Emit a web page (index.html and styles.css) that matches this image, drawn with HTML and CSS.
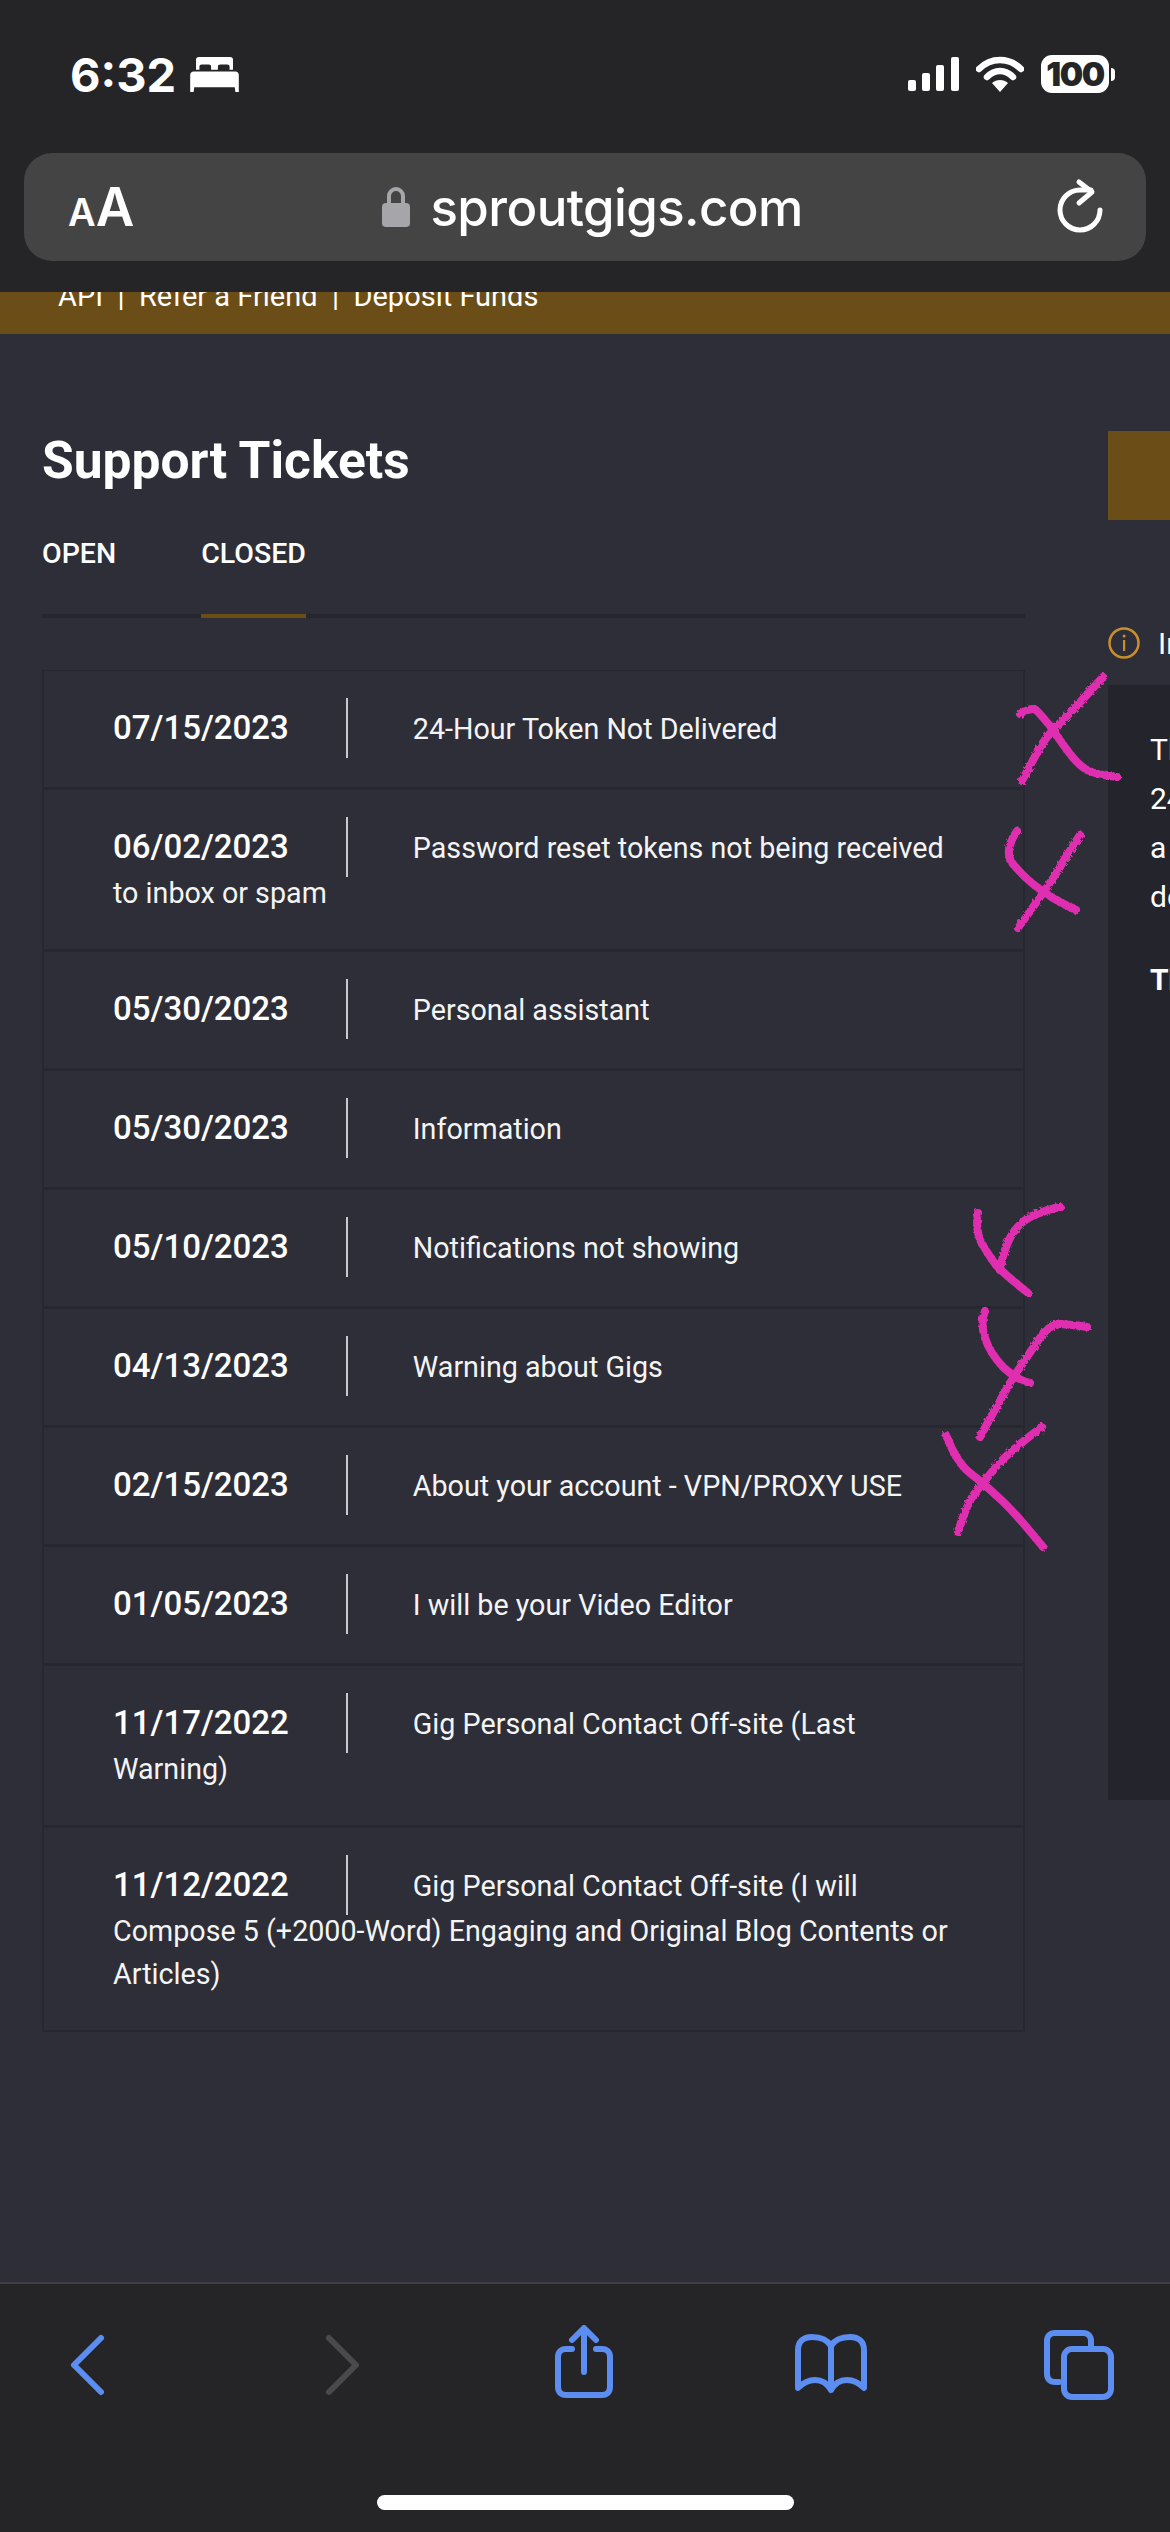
FILE: index.html
```html
<!DOCTYPE html>
<html lang="en">
<head>
  <meta charset="UTF-8">
  <title>Support Tickets | SproutGigs</title>
  <link rel="stylesheet" href="styles.css">
</head>
<body>
  <header class="browser-top">
    <div class="status-bar">
      <div class="status-left">
        <span class="clock">6:32</span>
        <svg class="bed-icon" viewBox="0 0 50 36"><path fill="#fff" d="M6 2.500C6 1 7 0 9 0h32c2 0 3 1 3 2.500V13h-3.500V10c0-1.500-.8-2.300-2.500-2.300h-7c-1.700 0-2.500.8-2.500 2.300v3h-7v-3c0-1.500-.8-2.300-2.500-2.300h-7C10.300 7.700 9.500 8.500 9.500 10v3H6zM3.500 15h43c2 0 3.500 1.500 3.500 3.500V36h-3.500l-.7-5H4.200l-.7 5H0V18.500C0 16.500 1.500 15 3.500 15z"/></svg>
      </div>
      <div class="status-right">
        <svg class="signal-icon" viewBox="0 0 51 34"><rect x="0" y="23" width="8" height="11" rx="2"/><rect x="14" y="16" width="8" height="18" rx="2"/><rect x="28" y="8" width="8" height="26" rx="2"/><rect x="43" y="0" width="8" height="34" rx="2"/></svg>
        <svg class="wifi-icon" viewBox="0 0 48 36"><path d="M3 13C15 1 33 1 45 13M11 21c8-8 18-8 26 0" fill="none" stroke="#fff" stroke-width="6.500" stroke-linecap="round"/><path fill="#fff" d="M24 36l-8-9c4.500-4 11.500-4 16 0z"/></svg>
        <div class="battery"><span class="battery-level">100</span><span class="battery-nub"></span></div>
      </div>
    </div>
    <div class="url-bar">
      <span class="text-size"><small>A</small>A</span>
      <div class="url">
        <svg class="lock-icon" viewBox="0 0 28 40"><path d="M7 18V9a7 7 0 0 1 14 0v9" fill="none" stroke="#a5a5aa" stroke-width="4"/><rect x="0" y="16" width="28" height="24" rx="4" fill="#a5a5aa"/></svg>
        <span>sproutgigs.com</span>
      </div>
      <svg class="reload-icon" viewBox="0 0 46 54"><path d="M42 30A20 20 0 1 1 22 10H33" fill="none" stroke="#fff" stroke-width="5" stroke-linecap="round"/><path d="M21 2l13 10-13 11" fill="none" stroke="#fff" stroke-width="5" stroke-linecap="round" stroke-linejoin="round"/></svg>
    </div>
  </header>

  <div class="top-links"><span>API &nbsp;|&nbsp; Refer a Friend &nbsp;|&nbsp; Deposit Funds</span></div>

  <main class="page">
    <section class="tickets">
      <h1>Support Tickets</h1>
      <nav class="tabs">
        <a class="tab" href="#">OPEN</a>
        <a class="tab active" href="#">CLOSED</a>
      </nav>
      <div class="ticket-list">
        <div class="ticket"><span class="date">07/15/2023</span><a class="subject">24-Hour Token Not Delivered</a></div>
        <div class="ticket"><span class="date">06/02/2023</span><a class="subject">Password reset tokens not being received to inbox or spam</a></div>
        <div class="ticket"><span class="date">05/30/2023</span><a class="subject">Personal assistant</a></div>
        <div class="ticket"><span class="date">05/30/2023</span><a class="subject">Information</a></div>
        <div class="ticket"><span class="date">05/10/2023</span><a class="subject">Notifications not showing</a></div>
        <div class="ticket"><span class="date">04/13/2023</span><a class="subject">Warning about Gigs</a></div>
        <div class="ticket"><span class="date">02/15/2023</span><a class="subject">About your account - VPN/PROXY USE</a></div>
        <div class="ticket"><span class="date">01/05/2023</span><a class="subject">I will be your Video Editor</a></div>
        <div class="ticket"><span class="date">11/17/2022</span><a class="subject">Gig Personal Contact Off-site (Last Warning)</a></div>
        <div class="ticket"><span class="date">11/12/2022</span><a class="subject">Gig Personal Contact Off-site (I will Compose 5 (+2000-Word) Engaging and Original Blog Contents or Articles)</a></div>
      </div>
    </section>

    <aside class="side">
      <div class="side-button"></div>
      <div class="side-info">
        <svg class="info-icon" viewBox="0 0 32 32"><circle cx="16" cy="16" r="14.500" fill="none" stroke="#c98f2c" stroke-width="2.500"/><rect x="15" y="13" width="2.200" height="11" fill="#c98f2c"/><circle cx="16.100" cy="9" r="1.500" fill="#c98f2c"/></svg>
        <span>Information</span>
      </div>
      <div class="side-panel">
        <p>The<br>24-hour<br>a<br>de</p>
        <p class="side-bold">The</p>
      </div>
    </aside>
  </main>

  <footer class="browser-bottom">
    <div class="toolbar">
      <svg class="tool back" viewBox="0 0 40 64"><path d="M33 5L6 32l27 27"/></svg>
      <svg class="tool forward" viewBox="0 0 40 64"><path d="M7 5l27 27L7 59"/></svg>
      <svg class="tool share" viewBox="0 0 60 74"><path d="M18 24h-6c-5 0-8 3-8 8v30c0 5 3 8 8 8h36c5 0 8-3 8-8V32c0-5-3-8-8-8h-6"/><path d="M30 47V4M18 15L30 3l12 12"/></svg>
      <svg class="tool book" viewBox="0 0 74 62"><path d="M37 12C33 5 26 3 18 3 9 3 4 8 4 16v38c6-6 11-8 17-8 7 0 12 3 16 10 4-7 9-10 16-10 6 0 11 2 17 8V16C70 8 65 3 56 3c-8 0-15 2-19 9zM37 12v44"/></svg>
      <svg class="tool tabs-icon" viewBox="0 0 70 70"><path d="M15 52h-4c-5 0-8-3-8-8V11c0-5 3-8 8-8h28c5 0 8 3 8 8v7"/><rect x="20" y="19" width="47" height="48" rx="8"/></svg>
    </div>
    <div class="home-indicator"></div>
  </footer>

  <svg class="scribbles" viewBox="0 0 1170 2532">
    <defs>
      <filter id="rough" x="-5%" y="-5%" width="110%" height="110%">
        <feTurbulence type="fractalNoise" baseFrequency="0.35" numOctaves="2" seed="4"/>
        <feDisplacementMap in="SourceGraphic" scale="4"/>
      </filter>
    </defs>
    <g filter="url(#rough)">
      <path d="M1020 714Q1033 706 1037 711Q1042 716 1050 726Q1057 736 1067 750Q1077 764 1087 770Q1097 775 1117 777"/>
      <path d="M1103 677Q1077 706 1064 719Q1050 732 1042 744Q1035 756 1022 781"/>
      <path d="M1017 831Q1003 851 1013 864Q1023 876 1033 884Q1043 892 1053 898Q1063 904 1076 910"/>
      <path d="M1080 835Q1067 855 1057 872Q1047 888 1018 928"/>
      <path d="M978 1213Q975 1230 982 1244Q990 1257 996 1265Q1003 1273 1028 1293"/>
      <path d="M1060 1207Q1033 1213 1023 1222Q1013 1230 1008 1242Q1003 1253 1000 1270"/>
      <path d="M985 1311Q980 1323 985 1338Q990 1353 1003 1367Q1017 1380 1030 1383"/>
      <path d="M1087 1327Q1063 1323 1055 1325Q1047 1327 1037 1342Q1027 1357 1017 1372Q1007 1387 980 1437"/>
      <path d="M946 1435Q957 1463 970 1473Q983 1483 998 1497Q1013 1510 1043 1547"/>
      <path d="M1042 1427Q1007 1453 995 1468Q983 1483 975 1493Q967 1503 958 1532"/>
    </g>
  </svg>
</body>
</html>
```

FILE: styles.css
```css
html, body {
  margin: 0;
  padding: 0;
}
body {
  position: relative;
  width: 1170px;
  height: 2532px;
  overflow: hidden;
  display: flex;
  flex-direction: column;
  background-color: #2d2e38;
  color: #fff;
  font-family: 'Roboto', 'Liberation Sans', sans-serif;
}

/* browser chrome, top */
.browser-top {
  height: 292px;
  flex-shrink: 0;
  box-sizing: border-box;
  padding: 55px 24px 0;
  background-color: #252527;
}
.status-bar {
  display: flex;
  justify-content: space-between;
  align-items: center;
  height: 38px;
  padding: 0 31px 0 46px;
}
.status-left,
.status-right {
  display: flex;
  align-items: center;
}
.clock {
  font-family: 'Inter', sans-serif;
  font-size: 47px;
  font-weight: 700;
}
.bed-icon {
  width: 49px;
  height: 35px;
  margin-left: 14px;
}
.signal-icon {
  width: 51px;
  height: 34px;
  fill: #fff;
}
.wifi-icon {
  width: 48px;
  height: 36px;
  margin-left: 17px;
}
.battery {
  display: flex;
  align-items: center;
  margin-left: 17px;
}
.battery-level {
  width: 68px;
  height: 38px;
  border-radius: 11px;
  background-color: #fff;
  color: #252527;
  font-family: 'Inter', sans-serif;
  font-size: 33px;
  font-weight: 900;
  line-height: 38px;
  text-align: center;
  letter-spacing: -1.500px;
}
.battery-nub {
  width: 4px;
  height: 13px;
  margin-left: 2px;
  border-radius: 0 4px 4px 0;
  background-color: #fff;
}
.url-bar {
  display: flex;
  align-items: center;
  justify-content: space-between;
  height: 108px;
  margin-top: 60px;
  padding: 0 42px 0 44px;
  border-radius: 28px;
  background-color: #444445;
}
.text-size {
  font-family: 'Inter', sans-serif;
  font-size: 53px;
  font-weight: 600;
}
.text-size small {
  font-size: 38px;
}
.url {
  display: flex;
  align-items: center;
  gap: 21px;
  margin-left: -8px;
  font-family: 'Inter', sans-serif;
  font-size: 51px;
  font-weight: 500;
  letter-spacing: -.6px;
}
.lock-icon {
  width: 28px;
  height: 40px;
}
.reload-icon {
  width: 46px;
  height: 54px;
  overflow: visible;
}

.top-links {
  height: 42px;
  flex-shrink: 0;
  overflow: hidden;
  padding-left: 58px;
  background-color: #6b4d17;
  font-size: 29px;
  line-height: 32px;
}
.top-links span {
  display: block;
  margin-top: -12px;
}

/* page */
.page {
  flex: 1;
  display: flex;
  gap: 83px;
  padding-left: 42px;
  min-height: 0;
}
.tickets {
  width: 983px;
  flex-shrink: 0;
}
h1 {
  margin: 97px 0 0;
  font-size: 51.5px;
  font-weight: 700;
  line-height: 60px;
}
.tabs {
  display: flex;
  gap: 85px;
  margin-top: 45px;
  border-bottom: 4px solid #25262e;
}
.tab {
  margin-bottom: -4px;
  padding-bottom: 42px;
  border-bottom: 4px solid transparent;
  color: #fff;
  font-size: 28.5px;
  font-weight: 500;
  line-height: 36px;
  text-decoration: none;
}
.tab.active {
  border-bottom-color: #6b4d17;
}
.ticket-list {
  margin-top: 52px;
  border: solid #262730;
  border-width: 1px 2px 2px;
}
.ticket {
  padding: 27px 62px 34px 69px;
  border-bottom: 3px solid #262730;
  font-size: 28.7px;
  line-height: 43px;
}
.ticket:last-child {
  border-bottom: 0;
}
.date {
  display: inline-block;
  margin-right: 65px;
  margin-bottom: -5px;
  padding-right: 57px;
  border-right: 2px solid #c9c9cd;
  font-size: 33px;
  font-weight: 500;
  line-height: 60px;
}
.subject {
  color: #f4f4f4;
}

/* right column, cut off by the window */
.side {
  width: 500px;
  flex-shrink: 0;
  margin-top: 97px;
}
.side-button {
  height: 89px;
  background-color: #6b4d17;
}
.side-info {
  display: flex;
  align-items: center;
  gap: 18px;
  height: 32px;
  margin-top: 107px;
  font-size: 30px;
}
.info-icon {
  width: 32px;
  height: 32px;
}
.side-panel {
  height: 1115px;
  box-sizing: border-box;
  margin-top: 26px;
  padding: 40px 0 0 42px;
  background-color: #23242c;
  font-size: 30px;
  line-height: 49px;
}
.side-panel p {
  margin: 0 0 34px;
}
.side-bold {
  font-weight: 700;
}

/* browser chrome, bottom */
.browser-bottom {
  height: 250px;
  flex-shrink: 0;
  box-sizing: border-box;
  border-top: 2px solid #3e3e44;
  background-color: #252527;
}
.toolbar {
  position: relative;
  height: 211px;
}
.tool {
  position: absolute;
  fill: none;
  stroke: #5b8ef0;
  stroke-width: 6;
  stroke-linecap: round;
  stroke-linejoin: round;
}
.back {
  left: 68px;
  top: 49px;
  width: 40px;
  height: 64px;
}
.forward {
  left: 322px;
  top: 49px;
  width: 40px;
  height: 64px;
  stroke: #4a4a4c;
}
.share {
  left: 554px;
  top: 41px;
  width: 60px;
  height: 74px;
}
.book {
  left: 794px;
  top: 50px;
  width: 74px;
  height: 62px;
}
.tabs-icon {
  left: 1044px;
  top: 46px;
  width: 70px;
  height: 70px;
}
.home-indicator {
  width: 417px;
  height: 15px;
  margin: 0 auto;
  border-radius: 8px;
  background-color: #fff;
}

/* hand-drawn marks over the screenshot */
.scribbles {
  position: absolute;
  left: 0;
  top: 0;
  width: 1170px;
  height: 2532px;
  fill: none;
  stroke: #e02fb0;
  stroke-width: 8;
  stroke-linecap: round;
  stroke-linejoin: round;
  pointer-events: none;
}
```
